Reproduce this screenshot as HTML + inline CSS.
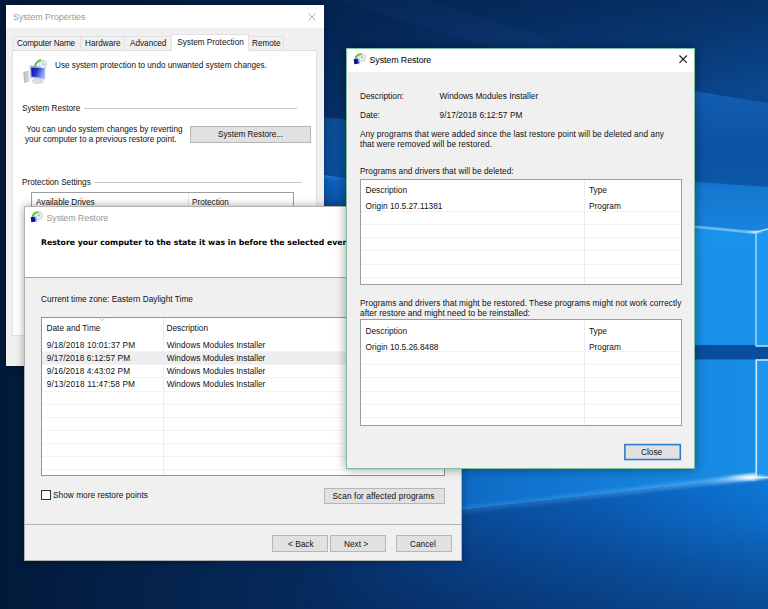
<!DOCTYPE html>
<html><head><meta charset="utf-8"><title>System Restore</title>
<style>
html,body{margin:0;padding:0;}
body{width:768px;height:609px;overflow:hidden;position:relative;background:#062a5c;font-family:"Liberation Sans",sans-serif;}
.a{position:absolute;box-sizing:border-box;}
.t{position:absolute;white-space:pre;line-height:12px;height:12px;}
.btn{position:absolute;box-sizing:border-box;background:#e1e1e1;border:1px solid #b6b6b6;}
.grid{position:absolute;left:0;right:0;height:1px;background:#f3f3f3;}
</style></head><body>

<svg class="a" style="left:0;top:0" width="768" height="609" viewBox="0 0 768 609">
<defs>
<linearGradient id="g0" x1="0" y1="0" x2="768" y2="0" gradientUnits="userSpaceOnUse"><stop offset="0" stop-color="#021a3a"/><stop offset=".39" stop-color="#062a5c"/><stop offset=".61" stop-color="#083470"/><stop offset=".9" stop-color="#0a4388"/><stop offset="1" stop-color="#0b4890"/></linearGradient>
<linearGradient id="b1" x1="0" y1="85" x2="0" y2="190" gradientUnits="userSpaceOnUse"><stop offset="0" stop-color="#1464ba"/><stop offset=".12" stop-color="#115cb0"/><stop offset=".6" stop-color="#0c52a2"/><stop offset="1" stop-color="#0d58a8"/></linearGradient>
<linearGradient id="b2" x1="0" y1="180" x2="0" y2="232" gradientUnits="userSpaceOnUse"><stop offset="0" stop-color="#1270c8"/><stop offset=".15" stop-color="#1478d0"/><stop offset="1" stop-color="#1784dc"/></linearGradient>
<linearGradient id="b3" x1="0" y1="226" x2="0" y2="480" gradientUnits="userSpaceOnUse"><stop offset="0" stop-color="#1a92ea"/><stop offset=".5" stop-color="#1890e8"/><stop offset="1" stop-color="#1688e0"/></linearGradient>
<linearGradient id="hm" x1="560" y1="0" x2="695" y2="0" gradientUnits="userSpaceOnUse"><stop offset="0" stop-color="#fff" stop-opacity="0"/><stop offset="1" stop-color="#fff"/></linearGradient>
<mask id="mh"><rect width="768" height="609" fill="url(#hm)"/></mask>
<linearGradient id="r1" x1="300" y1="0" x2="768" y2="0" gradientUnits="userSpaceOnUse"><stop offset="0" stop-color="#0a5ab0" stop-opacity="0"/><stop offset=".34" stop-color="#0e6ac4"/><stop offset=".64" stop-color="#137cd6"/><stop offset=".85" stop-color="#1788e2"/><stop offset="1" stop-color="#1890e8"/></linearGradient>
<linearGradient id="r2" x1="300" y1="0" x2="768" y2="0" gradientUnits="userSpaceOnUse"><stop offset="0" stop-color="#0a4a98" stop-opacity="0"/><stop offset=".34" stop-color="#0a4e9e"/><stop offset=".64" stop-color="#0b5eb8"/><stop offset=".85" stop-color="#0c6ecc"/><stop offset="1" stop-color="#0e78d8"/></linearGradient>
<linearGradient id="fade" x1="0" y1="480" x2="0" y2="609" gradientUnits="userSpaceOnUse"><stop offset="0" stop-color="#fff"/><stop offset=".3" stop-color="#fff" stop-opacity=".8"/><stop offset=".62" stop-color="#fff" stop-opacity=".42"/><stop offset="1" stop-color="#fff" stop-opacity=".05"/></linearGradient>
<mask id="m2"><rect width="768" height="609" fill="url(#fade)"/></mask>
<linearGradient id="beamline" x1="300" y1="0" x2="768" y2="0" gradientUnits="userSpaceOnUse"><stop offset="0" stop-color="#6fc0ff" stop-opacity="0"/><stop offset=".5" stop-color="#4faaf4" stop-opacity=".25"/><stop offset=".86" stop-color="#7cc6fc" stop-opacity=".4"/><stop offset=".95" stop-color="#cfeaff" stop-opacity=".85"/><stop offset=".975" stop-color="#fff"/></linearGradient>
<radialGradient id="spark" cx=".5" cy=".5" r=".5"><stop offset="0" stop-color="#fff"/><stop offset=".3" stop-color="#dff2ff" stop-opacity=".8"/><stop offset="1" stop-color="#8fd0ff" stop-opacity="0"/></radialGradient>
<filter id="bl" x="-5%" y="-20%" width="110%" height="140%"><feGaussianBlur stdDeviation="1.6"/></filter>
<filter id="bl2" x="-5%" y="-50%" width="110%" height="200%"><feGaussianBlur stdDeviation="0.7"/></filter>
<linearGradient id="topd" x1="0" y1="0" x2="0" y2="90" gradientUnits="userSpaceOnUse"><stop offset="0" stop-color="#011838" stop-opacity=".45"/><stop offset="1" stop-color="#011838" stop-opacity="0"/></linearGradient>
<linearGradient id="gp2" x1="0" y1="176" x2="0" y2="208" gradientUnits="userSpaceOnUse"><stop offset="0" stop-color="#2078d4"/><stop offset=".12" stop-color="#0f62c0"/><stop offset="1" stop-color="#0a4c9c"/></linearGradient>
<linearGradient id="gp1" x1="0" y1="117" x2="0" y2="180" gradientUnits="userSpaceOnUse"><stop offset="0" stop-color="#0b4c94"/><stop offset="1" stop-color="#0b4e98"/></linearGradient>
<linearGradient id="gp0" x1="0" y1="0" x2="0" y2="118" gradientUnits="userSpaceOnUse"><stop offset="0" stop-color="#04204a"/><stop offset=".4" stop-color="#05285a"/><stop offset="1" stop-color="#063068"/></linearGradient>
</defs>
<rect width="768" height="609" fill="url(#g0)"/>
<polygon points="335,0 430,0 575,48 495,48" fill="#2a6fc0" opacity=".12"/>
<rect width="768" height="90" fill="url(#topd)"/>
<rect x="318" y="30" width="36" height="100" fill="url(#gp0)"/>
<polygon points="318,116.5 354,120.2 354,212 318,212" fill="url(#gp1)"/>
<polygon points="318,174 354,179.7 354,212 318,212" fill="url(#gp2)"/>
<g mask="url(#mh)">
<polygon points="560,70 768,103 768,240 560,240" fill="url(#b1)"/>
<polygon points="560,172 768,187 768,240 560,240" fill="url(#b2)"/>
<polygon points="560,214 755,232 768,229 768,480 560,480" fill="url(#b3)"/>
</g>
<!-- region above lower beam -->
<polygon points="300,360 768,360 768,477 756,477 300,528.2" fill="url(#r1)"/>
<!-- region below lower beam -->
<polygon points="300,528.2 756,477 768,477 768,609 300,609" fill="url(#r2)" mask="url(#m2)"/>
<polygon points="300,524.2 756,473.5 756,479.5 300,532" fill="url(#beamline)" filter="url(#bl)"/>
<!-- dark band between panes -->
<rect x="560" y="345" width="208" height="14.5" fill="#0a4c9e"/>
<!-- top beam line from pane corner -->
<polygon points="755,231 690,225 690,227.5 755,234" fill="#9fd8ff" opacity=".6" filter="url(#bl2)"/>
<!-- panes -->
<polygon points="756,232 768,229 768,346 756,346" fill="#1c96ee"/>
<polygon points="756,360 768,360 768,478 756,478" fill="#1c96ee"/>
<path d="M768 229 L756 232 L756 346 L768 346" fill="none" stroke="#b6e0ff" stroke-width="1.3"/>
<path d="M768 360 L756.3 360 L756.3 477.5 L768 477.5" fill="none" stroke="#cdeaff" stroke-width="1.6"/>
<ellipse cx="750" cy="477.5" rx="26" ry="4.5" fill="url(#spark)"/>
<ellipse cx="755" cy="232" rx="10" ry="2.5" fill="url(#spark)" opacity=".7"/>
</svg>

<div class="a" style="left:6px;top:5px;width:318px;height:361px;background:#f0f0f0;box-shadow:0 0 8px rgba(0,0,0,.35);"></div>
<div class="a" style="left:6px;top:5px;width:318px;height:23px;background:#fff;"></div>
<svg class="a" style="left:308px;top:12.75px" width="8" height="8" viewBox="0 0 9 9"><path d="M0.5 0.5L8.5 8.5M8.5 0.5L0.5 8.5" stroke="#a5a5a5" stroke-width="1" fill="none"/></svg>
<div class="a" style="left:12px;top:50px;width:305px;height:286px;background:#fff;border:1px solid #e0e0e0;"></div>
<div class="a" style="left:12.5px;top:35.75px;width:68px;height:14.25px;background:#f0f0f0;border:1px solid #e2e2e2;border-bottom:none;"></div>
<div class="a" style="left:79.5px;top:35.75px;width:45.5px;height:14.25px;background:#f0f0f0;border:1px solid #e2e2e2;border-bottom:none;"></div>
<div class="a" style="left:124px;top:35.75px;width:48px;height:14.25px;background:#f0f0f0;border:1px solid #e2e2e2;border-bottom:none;"></div>
<div class="a" style="left:247.5px;top:35.75px;width:36.5px;height:14.25px;background:#f0f0f0;border:1px solid #e2e2e2;border-bottom:none;"></div>
<div class="a" style="left:171px;top:33.75px;width:77.5px;height:17.25px;background:#fff;border:1px solid #e2e2e2;border-bottom:none;"></div>
<svg class="a" style="left:16px;top:52px" width="40" height="40" viewBox="0 0 40 40">
<defs><linearGradient id="scr" x1="0" y1="0" x2="1" y2=".3"><stop offset="0" stop-color="#1212a4"/><stop offset=".45" stop-color="#2230c0"/><stop offset="1" stop-color="#8aa6f2"/></linearGradient>
<linearGradient id="twr" x1="0" y1="0" x2="1" y2="0"><stop offset="0" stop-color="#b4b6b9"/><stop offset="1" stop-color="#dcdddf"/></linearGradient></defs>
<ellipse cx="21.7" cy="29.3" rx="6" ry="2.9" fill="#dcdde0"/>
<path d="M7.3 20 L12.8 18.6 L13.4 29.4 L8.2 31Z" fill="url(#twr)"/>
<path d="M13.5 13.2 L29.6 14.1 L28.9 27.6 L14.1 26Z" fill="#b3c2f0"/>
<path d="M15.1 15.4 L28.3 16.1 L27.8 26 L15.6 24.6Z" fill="url(#scr)"/>
<circle cx="27" cy="12.2" r="3.9" fill="#e6eff5" stroke="#c3ccd4" stroke-width=".8"/>
<path d="M27 9.8V12.4H28.9" stroke="#8a9aa6" stroke-width=".6" fill="none"/>
<path d="M19 14.2 Q20 9.8 24.4 8.2" stroke="#76be52" stroke-width="2.2" fill="none" stroke-linecap="round"/>
</svg>
<div class="a" style="left:84px;top:107.5px;width:213px;height:1px;background:#c8c8c8;"></div>
<div class="a" style="left:95px;top:182px;width:207px;height:1px;background:#c8c8c8;"></div>
<div class="btn" style="left:190px;top:126px;width:121px;height:16.5px;"></div>
<div class="a" style="left:30.5px;top:191.6px;width:263.5px;height:40px;background:#fff;border:1px solid #9c9ea2;"></div>
<div class="a" style="left:187.6px;top:192.6px;width:1px;height:14px;background:#e5e5e5;"></div>
<div class="t" style="left:13px;top:10.5px;font-size:8.9px;color:#999;letter-spacing:-0.001px;">System Properties</div>
<div class="t" style="left:17px;top:37.8px;font-size:8.2px;color:#111;letter-spacing:-0.160px;">Computer Name</div>
<div class="t" style="left:85px;top:37.8px;font-size:8.2px;color:#111;">Hardware</div>
<div class="t" style="left:130px;top:37.8px;font-size:8.2px;color:#111;">Advanced</div>
<div class="t" style="left:177.3px;top:36.9px;font-size:8.2px;color:#111;">System Protection</div>
<div class="t" style="left:252px;top:37.8px;font-size:8.2px;color:#111;">Remote</div>
<div class="t" style="left:55px;top:59.8px;font-size:8.2px;color:#111;letter-spacing:-0.002px;">Use system protection to undo unwanted system changes.</div>
<div class="t" style="left:22px;top:102.6px;font-size:8.2px;color:#111;">System Restore</div>
<div class="t" style="left:26.2px;top:124.0px;font-size:8.2px;color:#111;letter-spacing:0.001px;">You can undo system changes by reverting</div>
<div class="t" style="left:25px;top:133.6px;font-size:8.2px;color:#111;">your computer to a previous restore point.</div>
<div class="t" style="left:218px;top:128.5px;font-size:8.2px;color:#111;">System Restore...</div>
<div class="t" style="left:22px;top:176.8px;font-size:8.2px;color:#111;">Protection Settings</div>
<div class="t" style="left:36px;top:197.3px;font-size:8.2px;color:#111;">Available Drives</div>
<div class="t" style="left:192px;top:197.3px;font-size:8.2px;color:#111;">Protection</div>
<div class="a" style="left:23.5px;top:206px;width:438px;height:354.5px;background:#f0f0f0;border:1px solid #b2b2b2;box-shadow:0 0 8px rgba(0,0,0,.35);"></div>
<div class="a" style="left:24.5px;top:207px;width:436px;height:70px;background:#fff;"></div>
<div class="a" style="left:24.5px;top:277px;width:436px;height:1px;background:#a8a8a8;"></div>
<svg class="a" style="left:30px;top:210.5px" width="13" height="13" viewBox="0 0 13 13">
<circle cx="8.6" cy="4.6" r="3.9" fill="#eaf2f4" stroke="#c4c2cc" stroke-width=".8"/><path d="M8.6 2.2V4.8H10.4" stroke="#7d8c96" stroke-width=".6" fill="none"/>
<path d="M2.6 5.4 Q3.4 1.8 7.6 1.2" stroke="#62bb44" stroke-width="1.8" fill="none" stroke-linecap="round"/>
<path d="M0.7 6.2 L6.4 5.6 L7.2 10.4 L1.4 11.2Z" fill="#9aaaf2"/><path d="M0.7 6.2 L4.6 5.8 L5.6 10.6 L1.4 11.2Z" fill="#12129c"/></svg>
<div class="a" style="left:41px;top:316.8px;width:404px;height:158.8px;background:#fff;border:1px solid #8f9298;overflow:hidden;"><div class="a" style="left:0;right:0;top:33.6px;height:13px;background:#eeeeee;"></div><div class="grid" style="top:33.6px"></div><div class="grid" style="top:46.7px"></div><div class="grid" style="top:59.7px"></div><div class="grid" style="top:72.8px"></div><div class="grid" style="top:85.8px"></div><div class="grid" style="top:98.8px"></div><div class="grid" style="top:111.9px"></div><div class="grid" style="top:125.0px"></div><div class="grid" style="top:138.0px"></div><div class="grid" style="top:151.1px"></div><div class="a" style="left:120.5px;top:0;width:1px;height:158px;background:#ececec;"></div><svg class="a" style="left:57px;top:0.5px" width="6" height="3.5" viewBox="0 0 7 4"><path d="M.5 .5L3.5 3L6.5 .5" stroke="#aaa" fill="none" stroke-width=".8"/></svg></div>
<div class="a" style="left:41px;top:490px;width:10px;height:10px;background:#fff;border:1px solid #333;"></div>
<div class="btn" style="left:323.5px;top:487.5px;width:121px;height:16.5px;"></div>
<div class="a" style="left:24.5px;top:524px;width:436px;height:1px;background:#b4b4b4;"></div>
<div class="btn" style="left:272px;top:535px;width:56px;height:16.5px;"></div>
<div class="btn" style="left:330px;top:535px;width:56px;height:16.5px;"></div>
<div class="btn" style="left:395.5px;top:535px;width:56px;height:16.5px;"></div>
<div class="a" style="left:24.5px;top:206.5px;width:436px;height:353px;overflow:hidden;">
<div class="t" style="left:22.0px;top:5.5px;font-size:8.9px;color:#999;letter-spacing:-0.103px;">System Restore</div>
<div class="t" style="left:16.5px;top:30.5px;font-size:7.77px;color:#000;font-family:'DejaVu Sans', sans-serif;font-weight:bold;">Restore your computer to the state it was in before the selected event</div>
<div class="t" style="left:16.5px;top:86.5px;font-size:8.3px;color:#111;letter-spacing:0.007px;">Current time zone: Eastern Daylight Time</div>
<div class="t" style="left:22.0px;top:115.8px;font-size:8.3px;color:#111;">Date and Time</div>
<div class="t" style="left:142.0px;top:115.8px;font-size:8.3px;color:#111;">Description</div>
<div class="t" style="left:22.200000000000003px;top:132.1px;font-size:8.3px;color:#111;letter-spacing:0.106px;">9/18/2018 10:01:37 PM</div>
<div class="t" style="left:142.2px;top:132.1px;font-size:8.3px;color:#111;">Windows Modules Installer</div>
<div class="t" style="left:22.200000000000003px;top:145.1px;font-size:8.3px;color:#111;letter-spacing:0.092px;">9/17/2018 6:12:57 PM</div>
<div class="t" style="left:142.2px;top:145.1px;font-size:8.3px;color:#111;">Windows Modules Installer</div>
<div class="t" style="left:22.200000000000003px;top:158.1px;font-size:8.3px;color:#111;letter-spacing:0.092px;">9/16/2018 4:43:02 PM</div>
<div class="t" style="left:142.2px;top:158.1px;font-size:8.3px;color:#111;">Windows Modules Installer</div>
<div class="t" style="left:22.200000000000003px;top:171.1px;font-size:8.3px;color:#111;letter-spacing:0.135px;">9/13/2018 11:47:58 PM</div>
<div class="t" style="left:142.2px;top:171.1px;font-size:8.3px;color:#111;">Windows Modules Installer</div>
<div class="t" style="left:28.5px;top:282.5px;font-size:8.3px;color:#111;letter-spacing:0.019px;">Show more restore points</div>
<div class="t" style="left:307.9px;top:283.0px;font-size:8.3px;color:#111;letter-spacing:0.079px;">Scan for affected programs</div>
<div class="t" style="left:263.5px;top:331.0px;font-size:8.3px;color:#111;">&lt; Back</div>
<div class="t" style="left:319.5px;top:331.0px;font-size:8.3px;color:#111;">Next &gt;</div>
<div class="t" style="left:385.5px;top:331.0px;font-size:8.3px;color:#111;">Cancel</div>
</div>
<div class="a" style="left:346.25px;top:47.75px;width:349px;height:421.5px;background:#f0f0f0;border:1px solid #7fbf9b;box-shadow:0 0 10px rgba(0,0,0,.4);"></div>
<div class="a" style="left:347.5px;top:49px;width:346.5px;height:23px;background:#fff;"></div>
<svg class="a" style="left:352.5px;top:52.5px" width="13" height="13" viewBox="0 0 13 13">
<circle cx="8.6" cy="4.6" r="3.9" fill="#eaf2f4" stroke="#c4c2cc" stroke-width=".8"/><path d="M8.6 2.2V4.8H10.4" stroke="#7d8c96" stroke-width=".6" fill="none"/>
<path d="M2.6 5.4 Q3.4 1.8 7.6 1.2" stroke="#62bb44" stroke-width="1.8" fill="none" stroke-linecap="round"/>
<path d="M0.7 6.2 L6.4 5.6 L7.2 10.4 L1.4 11.2Z" fill="#9aaaf2"/><path d="M0.7 6.2 L4.6 5.8 L5.6 10.6 L1.4 11.2Z" fill="#12129c"/></svg>
<svg class="a" style="left:678.6px;top:55.4px" width="8.4" height="8.4" viewBox="0 0 9 9"><path d="M0.5 0.5L8.5 8.5M8.5 0.5L0.5 8.5" stroke="#1a1a1a" stroke-width="1.25" fill="none"/></svg>
<div class="a" style="left:360px;top:178.6px;width:322px;height:106px;background:#fff;border:1px solid #9a9ca0;overflow:hidden;"><div class="grid" style="top:31.6px"></div><div class="grid" style="top:44.7px"></div><div class="grid" style="top:57.8px"></div><div class="grid" style="top:70.9px"></div><div class="grid" style="top:84.0px"></div><div class="grid" style="top:97.1px"></div><div class="a" style="left:223px;top:0;width:1px;height:200px;background:#ececec;"></div></div>
<div class="a" style="left:360px;top:318.7px;width:322px;height:107px;background:#fff;border:1px solid #9a9ca0;overflow:hidden;"><div class="grid" style="top:31.6px"></div><div class="grid" style="top:44.7px"></div><div class="grid" style="top:57.8px"></div><div class="grid" style="top:70.9px"></div><div class="grid" style="top:84.0px"></div><div class="grid" style="top:97.1px"></div><div class="a" style="left:223px;top:0;width:1px;height:200px;background:#ececec;"></div></div>
<svg class="a" style="left:623px;top:443px" width="59" height="18" viewBox="0 0 59 18"><rect x="1.9" y="1.6" width="55.4" height="14.9" fill="#e1e1e1" stroke="#2f7bd0" stroke-width="1.6"/></svg>
<div class="t" style="left:369.5px;top:54.0px;font-size:8.9px;color:#000;letter-spacing:-0.103px;">System Restore</div>
<div class="t" style="left:360px;top:89.8px;font-size:8.3px;color:#111;">Description:</div>
<div class="t" style="left:439.5px;top:89.8px;font-size:8.3px;color:#111;">Windows Modules Installer</div>
<div class="t" style="left:360px;top:109.0px;font-size:8.3px;color:#111;">Date:</div>
<div class="t" style="left:439.5px;top:109.0px;font-size:8.3px;color:#111;letter-spacing:0.067px;">9/17/2018 6:12:57 PM</div>
<div class="t" style="left:360px;top:128.2px;font-size:8.3px;color:#111;letter-spacing:0.058px;">Any programs that were added since the last restore point will be deleted and any</div>
<div class="t" style="left:360px;top:137.8px;font-size:8.3px;color:#111;letter-spacing:0.082px;">that were removed will be restored.</div>
<div class="t" style="left:360px;top:165.3px;font-size:8.3px;color:#111;letter-spacing:0.025px;">Programs and drivers that will be deleted:</div>
<div class="t" style="left:365.5px;top:184.0px;font-size:8.3px;color:#111;">Description</div>
<div class="t" style="left:589px;top:184.0px;font-size:8.3px;color:#111;">Type</div>
<div class="t" style="left:365.5px;top:199.8px;font-size:8.3px;color:#111;">Origin 10.5.27.11381</div>
<div class="t" style="left:589px;top:199.8px;font-size:8.3px;color:#111;">Program</div>
<div class="t" style="left:360px;top:296.5px;font-size:8.3px;color:#111;letter-spacing:0.052px;">Programs and drivers that might be restored. These programs might not work correctly</div>
<div class="t" style="left:360px;top:307.0px;font-size:8.43px;color:#111;">after restore and might need to be reinstalled:</div>
<div class="t" style="left:365.5px;top:324.8px;font-size:8.3px;color:#111;">Description</div>
<div class="t" style="left:589px;top:324.8px;font-size:8.3px;color:#111;">Type</div>
<div class="t" style="left:365.5px;top:341.0px;font-size:8.3px;color:#111;">Origin 10.5.26.8488</div>
<div class="t" style="left:589px;top:341.0px;font-size:8.3px;color:#111;">Program</div>
<div class="t" style="left:641px;top:446.0px;font-size:8.3px;color:#111;">Close</div>
</body></html>
